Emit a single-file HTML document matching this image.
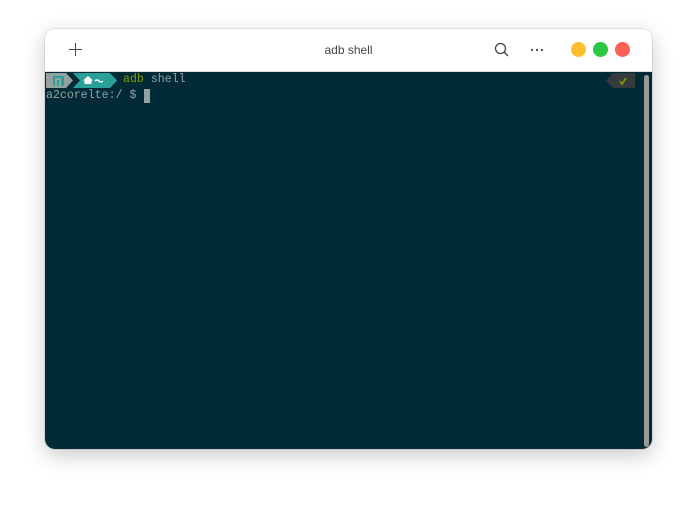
<!DOCTYPE html>
<html><head><style>
body{margin:0;width:697px;height:510px;background:#fff;position:relative;overflow:hidden;font-family:"Liberation Sans",sans-serif}
.win{position:absolute;left:45px;top:29px;width:607px;height:420px;border-radius:10px;background:#fff;box-shadow:0 6px 22px rgba(0,0,0,.22),0 0 0 1px rgba(0,0,0,.08);overflow:hidden}
.title{position:absolute;left:0;right:0;top:14px;text-align:center;font-size:12px;color:#444}
.term{position:absolute;left:0;top:42px;width:607px;height:378px;background:#002b36;border-top:1px solid #ddd}
.mono{font-family:"Liberation Mono","DejaVu Sans Mono",monospace;font-size:11.6px;position:absolute;white-space:pre}
.dot{position:absolute;top:13px;width:15px;height:15px;border-radius:50%}
</style></head><body>
<div class="win">
  <div style="position:absolute;left:24px;top:20px;width:13px;height:1.3px;background:#444"></div>
  <div style="position:absolute;left:30px;top:14px;width:1.3px;height:13px;background:#444"></div>
  <div class="title">adb shell</div>
  <svg style="position:absolute;left:449px;top:13px" width="16" height="16"><circle cx="6.5" cy="6.5" r="5" fill="none" stroke="#444" stroke-width="1.3"/><line x1="10" y1="10" x2="14" y2="14" stroke="#444" stroke-width="1.4"/></svg>
  <svg style="position:absolute;left:485px;top:19px" width="16" height="4"><circle cx="2" cy="2" r="1.1" fill="#444"/><circle cx="7" cy="2" r="1.1" fill="#444"/><circle cx="12" cy="2" r="1.1" fill="#444"/></svg>
  <div class="dot" style="left:526px;background:#fdc02c"></div>
  <div class="dot" style="left:548px;background:#2ac840"></div>
  <div class="dot" style="left:570px;background:#fe5f57"></div>
  <div class="term">
    <svg style="position:absolute;left:1px;top:1px" width="75" height="15">
      <rect x="0" y="0" width="20" height="15" fill="#93a1a1"/>
      <polygon points="20,0 27,7.5 20,15" fill="#93a1a1"/>
      <polygon points="27,0 64,0 71,7.5 64,15 27,15 34,7.5" fill="#2aa198"/>
      <rect x="7" y="3" width="11" height="10" fill="#2aa198"/>
      <rect x="9" y="5" width="2" height="8" fill="#93a1a1"/><rect x="13" y="5" width="2" height="8" fill="#93a1a1"/><rect x="9" y="5" width="6" height="2" fill="#93a1a1"/>
      <polygon points="42,3 47,7.5 45.5,7.5 45.5,11 38.5,11 38.5,7.5 37,7.5" fill="#fff"/>
      <path d="M49 8 q2 -2 4 0 t4 0" stroke="#fff" stroke-width="1.3" fill="none"/>
    </svg>
    <div class="mono" style="left:78px;top:1px;color:#859900">adb <span style="color:#93a1a1">shell</span></div>
    <div class="mono" style="left:1px;top:17px;color:#93a1a1">a2corelte:/ $ </div>
    <div style="position:absolute;left:99px;top:17px;width:6px;height:14px;background:#93a1a1"></div>
    <svg style="position:absolute;left:561px;top:1px" width="29" height="15"><polygon points="0,7.5 7,0 29,0 29,15 7,15" fill="#333b3c"/><path d="M14 8 l2 3 l4 -6" stroke="#859900" stroke-width="1.6" fill="none"/></svg>
    <div style="position:absolute;left:599px;top:3px;width:5px;height:372px;background:#999;border-radius:2.5px"></div>
  </div>
</div>
</body></html>
